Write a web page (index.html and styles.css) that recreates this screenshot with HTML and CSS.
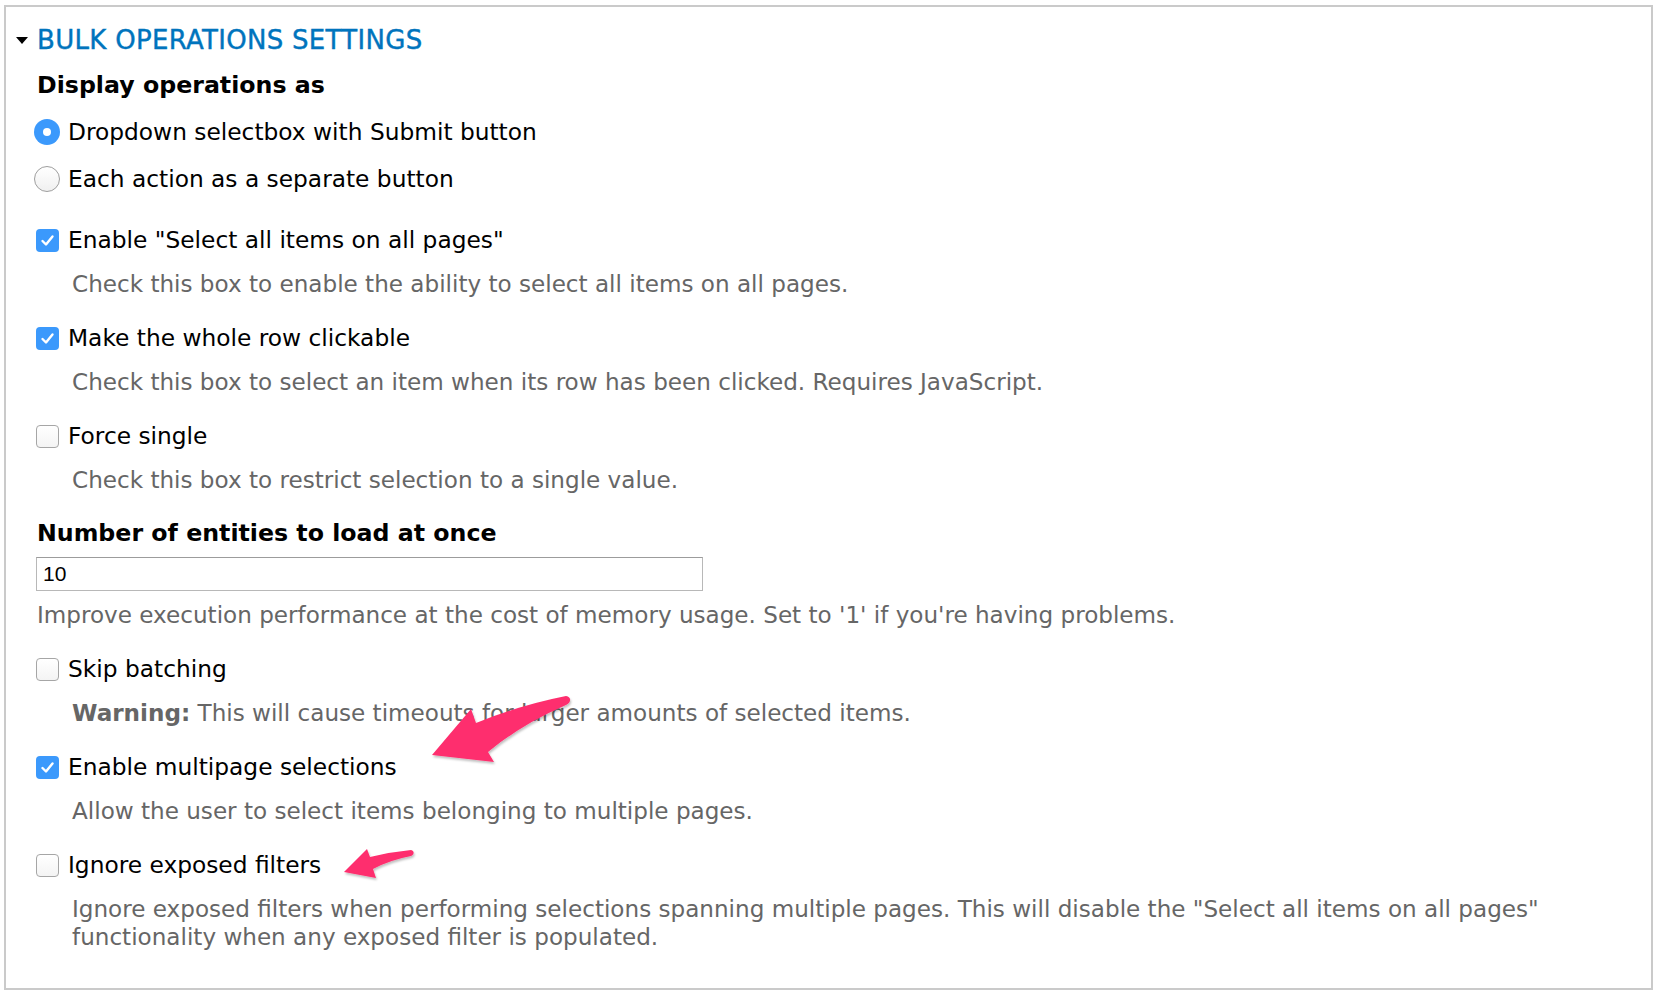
FILE: index.html
```html
<!DOCTYPE html>
<html>
<head>
<meta charset="utf-8">
<link rel="stylesheet" href="styles.css">
</head>
<body>
<div class="fieldset">
  <div class="legend"><span class="tri"></span><span class="legend-text">BULK OPERATIONS SETTINGS</span></div>
  <div class="content">
    <div class="group-label">Display operations as</div>
    <div class="radios">
      <div class="opt"><span class="radio on"></span><span class="lbl">Dropdown selectbox with Submit button</span></div>
      <div class="opt"><span class="radio"></span><span class="lbl">Each action as a separate button</span></div>
    </div>

    <div class="item first">
      <div class="opt"><span class="cb on"><svg viewBox="0 0 23 23" width="23" height="23"><polyline points="6.5,12 10,15.5 16.5,7.5" fill="none" stroke="#fff" stroke-width="2.4" stroke-linecap="round" stroke-linejoin="round"/></svg></span><span class="lbl">Enable "Select all items on all pages"</span></div>
      <div class="desc">Check this box to enable the ability to select all items on all pages.</div>
    </div>

    <div class="item">
      <div class="opt"><span class="cb on"><svg viewBox="0 0 23 23" width="23" height="23"><polyline points="6.5,12 10,15.5 16.5,7.5" fill="none" stroke="#fff" stroke-width="2.4" stroke-linecap="round" stroke-linejoin="round"/></svg></span><span class="lbl">Make the whole row clickable</span></div>
      <div class="desc">Check this box to select an item when its row has been clicked. Requires JavaScript.</div>
    </div>

    <div class="item">
      <div class="opt"><span class="cb"></span><span class="lbl">Force single</span></div>
      <div class="desc">Check this box to restrict selection to a single value.</div>
    </div>

    <div class="text-item">
      <div class="group-label">Number of entities to load at once</div>
      <div class="input">10</div>
      <div class="desc plain">Improve execution performance at the cost of memory usage. Set to '1' if you're having problems.</div>
    </div>

    <div class="item">
      <div class="opt"><span class="cb"></span><span class="lbl">Skip batching</span></div>
      <div class="desc"><b>Warning:</b> This will cause timeouts for larger amounts of selected items.</div>
    </div>

    <div class="item">
      <div class="opt"><span class="cb on"><svg viewBox="0 0 23 23" width="23" height="23"><polyline points="6.5,12 10,15.5 16.5,7.5" fill="none" stroke="#fff" stroke-width="2.4" stroke-linecap="round" stroke-linejoin="round"/></svg></span><span class="lbl">Enable multipage selections</span></div>
      <div class="desc">Allow the user to select items belonging to multiple pages.</div>
    </div>

    <div class="item">
      <div class="opt"><span class="cb"></span><span class="lbl">Ignore exposed filters</span></div>
      <div class="desc wrap">Ignore exposed filters when performing selections spanning multiple pages. This will disable the "Select all items on all pages" functionality when any exposed filter is populated.</div>
    </div>
  </div>
</div>
<svg class="arrows" width="1662" height="1000" viewBox="0 0 1662 1000">
  <defs>
    <filter id="sh" x="-20%" y="-20%" width="140%" height="140%">
      <feDropShadow dx="1" dy="2" stdDeviation="1.2" flood-color="#000" flood-opacity="0.25"/>
    </filter>
  </defs>
  <path filter="url(#sh)" fill="#fe2f6e" d="M566 696 C572 697 571 703 566 705 Q522 724 488 752 L494 762 L432 755 L471 709 L476 723 Q520 705 566 696 Z"/>
  <path filter="url(#sh)" fill="#fe2f6e" d="M411 850 C415 851 414 855 411 856 Q390 860 373 869 L376 878 L344 872 L367 849 L370 857 Q390 852 411 850 Z"/>
</svg>
</body>
</html>
```

FILE: styles.css
```css
html, body {
  margin: 0;
  padding: 0;
  background: #fff;
}
body {
  position: relative;
  width: 1662px;
  height: 1000px;
  overflow: hidden;
  font-family: "DejaVu Sans", "Noto Sans", sans-serif;
  color: #000;
}
.fieldset {
  box-sizing: border-box;
  margin: 5px 0 0 4px;
  width: 1649px;
  height: 985px;
  border: 2px solid #cacaca;
}
.legend {
  display: flex;
  align-items: center;
  height: 30px;
  margin-top: 18px;
  padding-left: 10px;
}
.tri {
  width: 0;
  height: 0;
  border-left: 6px solid transparent;
  border-right: 6px solid transparent;
  border-top: 7px solid #000;
  margin-right: 9px;
}
.legend-text {
  color: #0074bd;
  font-size: 26px;
  line-height: 30px;
  letter-spacing: 0.3px;
  -webkit-text-stroke: 0.4px #0074bd;
}
.content {
  padding-left: 31px;
}
.group-label {
  font-weight: bold;
  font-size: 23.7px;
  line-height: 30px;
}
.content > .group-label {
  margin-top: 15px;
}
.radios {
  margin-top: 18px;
  display: flex;
  flex-direction: column;
  gap: 19px;
}
.opt {
  display: flex;
  align-items: center;
  height: 28px;
}
.lbl {
  font-size: 23.3px;
  line-height: 28px;
}
.radio {
  box-sizing: border-box;
  width: 26px;
  height: 26px;
  border-radius: 50%;
  margin-left: -3px;
  margin-right: 8px;
  border: 1px solid #9e9e9e;
  background: linear-gradient(#fff, #f0f0f0);
  position: relative;
}
.radio.on {
  border: none;
  background: #3b99fc;
}
.radio.on::after {
  content: "";
  position: absolute;
  left: 9px;
  top: 9px;
  width: 8px;
  height: 8px;
  border-radius: 50%;
  background: #fff;
}
.cb {
  box-sizing: border-box;
  width: 23px;
  height: 23px;
  border-radius: 4px;
  margin-left: -1px;
  margin-right: 9px;
  border: 1px solid #a6a6a6;
  background: linear-gradient(#fff, #f4f4f4);
  display: flex;
}
.cb.on {
  border: none;
  background: #3b99fc;
}
.item {
  margin-top: 26px;
}
.item.first {
  margin-top: 33px;
}
.desc {
  color: #666;
  font-size: 23.1px;
  line-height: 28px;
  padding-left: 35px;
  margin-top: 16px;
}
.desc b {
  font-weight: bold;
}
.desc.plain {
  padding-left: 0;
  margin-top: 10px;
}
.desc.wrap {
  width: 1520px;
}
.text-item {
  margin-top: 24px;
}
.input {
  box-sizing: border-box;
  width: 667px;
  height: 34px;
  margin-left: -1px;
  margin-top: 9px;
  border: 1px solid #b8b8b8;
  border-top-color: #9c9c9c;
  font-family: "Liberation Sans", Arial, sans-serif;
  font-size: 21px;
  line-height: 32px;
  padding-left: 6px;
}
.arrows {
  position: absolute;
  left: 0;
  top: 0;
  pointer-events: none;
}
```
